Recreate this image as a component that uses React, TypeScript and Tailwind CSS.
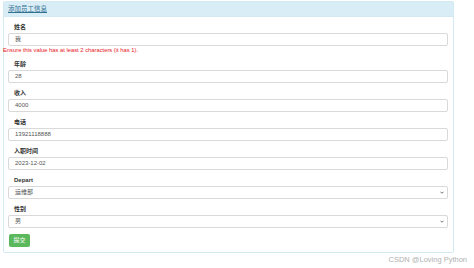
const FIELDS = [
  { label: '姓名', value: '我', error: 'Ensure this value has at least 2 characters (it has 1).' },
  { label: '年龄', value: '28' },
  { label: '收入', value: '4000' },
  { label: '电话', value: '13921118888' },
  { label: '入职时间', value: '2023-12-02' },
]

const SELECTS = [
  { label: 'Depart', value: '运维部' },
  { label: '性别', value: '男' },
]

function Chevron() {
  return (
    <svg width="4" height="3" viewBox="0 0 10 8" className="shrink-0">
      <path d="M1 2 L5 6 L9 2" fill="none" stroke="#555" strokeWidth="2.2" />
    </svg>
  )
}

export default function App() {
  return (
    <div
      className="relative h-[268px] w-[474px] overflow-hidden bg-white pt-[1px] text-[#333]"
      style={{ fontFamily: '"Liberation Sans", "Noto Sans CJK SC", sans-serif' }}
    >
      <div className="ml-[3px] w-[451px] rounded-[2px] border border-[#d3eaf3]">
        <div className="flex h-[15px] items-center border-b border-[#d3eaf3] bg-[#d9edf7] px-[4px]">
          <span className="text-[6.5px] leading-none text-[#31708f] underline">添加员工信息</span>
        </div>

        <div className="pb-[5px] pl-[4px] pr-[5px] pt-[6px]">
          {FIELDS.map((f) => (
            <div key={f.label}>
              <div className="mb-[2px] h-[8px] pl-[6px] text-[6px] font-bold leading-[8px]">{f.label}</div>
              <div className="mb-[6px] flex h-[13px] items-center rounded-[2px] border border-[#d9d9d9] pl-[6px] text-[6px] text-[#555]">
                {f.value}
              </div>
              {f.error && (
                <div className="-ml-[5px] -mt-[6px] mb-[6px] h-[8px] whitespace-nowrap text-[5.8px] leading-[8px] text-[#e8141c]">
                  {f.error}
                </div>
              )}
            </div>
          ))}

          {SELECTS.map((s) => (
            <div key={s.label}>
              <div className="mb-[2px] h-[8px] pl-[6px] text-[6px] font-bold leading-[8px]">{s.label}</div>
              <div className="mb-[6px] flex h-[13px] items-center justify-between rounded-[2px] border border-[#d9d9d9] pl-[6px] pr-[3px] text-[6px] text-[#555]">
                <span>{s.value}</span>
                <Chevron />
              </div>
            </div>
          ))}

          <button
            type="button"
            className="ml-[1px] mt-[1px] flex h-[13px] w-[21px] items-center justify-center rounded-[2px] bg-[#5cb85c] text-[6px] text-white"
          >
            提交
          </button>
        </div>
      </div>

      <span className="absolute right-[7px] top-[256px] text-[7.5px] leading-[8px] text-[#b0b0b0]">
        CSDN @Loving Python
      </span>
    </div>
  )
}
